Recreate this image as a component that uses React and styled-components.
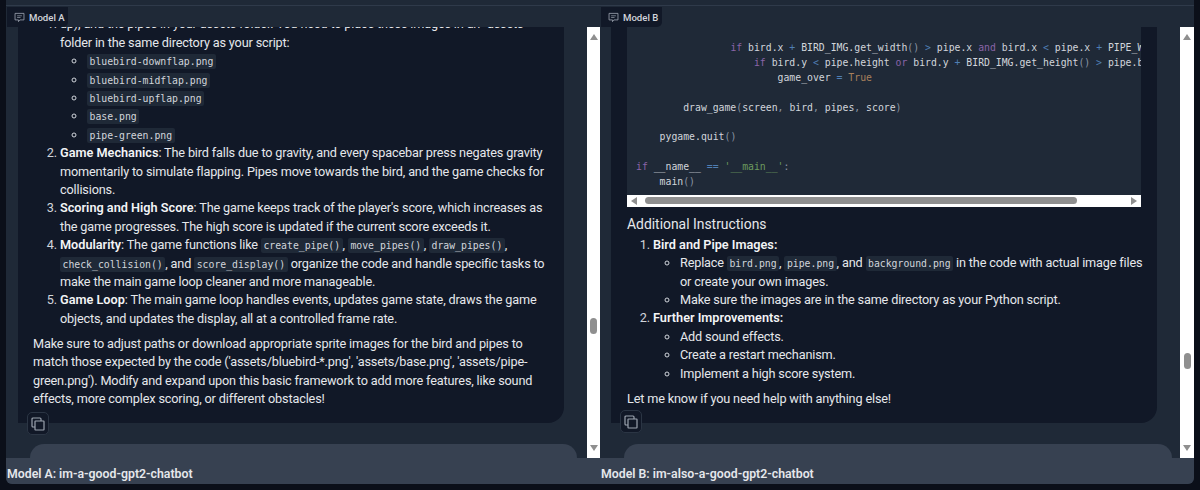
import React from "react";
import styled, { createGlobalStyle } from "styled-components";

const Global = createGlobalStyle`
  html, body { margin: 0; padding: 0; background: #0b0f19; }
  body { font-family: Roboto, "Liberation Sans", sans-serif; }
`;

const Page = styled.div`
  width: 1200px;
  height: 490px;
  padding: 0 6px 6px;
  box-sizing: border-box;
  overflow: hidden;
  background: #0b0f19;
`;
const Shell = styled.div`
  height: 484px;
  display: flex;
  flex-direction: column;
  background: #1f2937;
  border-radius: 0 0 6px 6px;
  overflow: hidden;
`;
const TopStrip = styled.div`
  height: 5px;
  flex: none;
  background: #1f2937;
  border-bottom: 1px solid #2f3a4a;
`;
const Columns = styled.div`
  flex: 1;
  min-height: 0;
  display: grid;
  grid-template-columns: 594px 594px;
`;
const Column = styled.section`
  position: relative;
  display: flex;
  flex-direction: column;
  min-height: 0;
  padding-top: 21px;
  box-sizing: border-box;
`;
const TabLabel = styled.div`
  position: absolute;
  top: 1px;
  left: ${(p) => p.$left}px;
  z-index: 3;
  width: 61px;
  height: 20px;
  display: flex;
  align-items: center;
  gap: 4px;
  padding-left: 7px;
  box-sizing: border-box;
  background: #111827;
  border-radius: 0 0 5px 0;
  color: #d1d5db;
  font-size: 9.6px;
  font-weight: 500;
  white-space: nowrap;
`;
const Body = styled.div`
  flex: 1;
  min-height: 0;
  display: flex;
`;
const Viewport = styled.div`
  position: relative;
  flex: 1;
  min-width: 0;
  overflow: hidden;
  display: flex;
  flex-direction: column;
  justify-content: flex-end;
`;
const Card = styled.article`
  flex: none;
  width: 546px;
  margin-left: ${(p) => p.$inset}px;
  padding: 0 16px ${(p) => p.$bottom}px ${(p) => p.$pad}px;
  box-sizing: border-box;
  background: #111827;
  border-radius: 0 0 16px 0;
  color: #e5e7eb;
  font-size: 12.7px;
  letter-spacing: -0.16px;
  line-height: 18.4px;
`;
const Numbered = styled.ol`
  margin: 0;
  padding-left: ${(p) => p.$indent}px;
`;
const Bulleted = styled.ul`
  margin: 0;
  padding-left: 27px;
  list-style: circle;
`;
const Item = styled.li`
  white-space: nowrap;
  &::marker { color: #d1d5db; }
`;
const Strong = styled.strong`
  font-weight: 600;
  letter-spacing: 0;
  color: #f3f4f6;
`;
const Code = styled.code`
  font-family: "DejaVu Sans Mono", monospace;
  font-size: 9.8px;
  letter-spacing: 0;
  line-height: 1;
  padding: 2px 2.5px;
  background: #1f2937;
  border-radius: 2px;
  color: #d1d5db;
`;
const Para = styled.p`
  margin: 6.6px 0 0;
  white-space: nowrap;
`;
const Heading = styled.h3`
  margin: 0;
  font-size: 13.9px;
  font-weight: 400;
  letter-spacing: 0;
  line-height: 21.6px;
  color: #e5e7eb;
`;
const CodeBlock = styled.div`
  width: 514px;
  margin-bottom: 7.2px;
`;
const Pre = styled.pre`
  margin: 0;
  padding: 0 9px 5px;
  height: 168px;
  box-sizing: border-box;
  overflow: hidden;
  display: flex;
  flex-direction: column;
  justify-content: flex-end;
  background: #1f2937;
  font-family: "DejaVu Sans Mono", monospace;
  font-size: 9.8px;
  letter-spacing: 0;
  line-height: 14.9px;
  color: #d1d5db;
`;
const Kw = styled.span` color: #8a64a8; `;
const Op = styled.span` color: #4f7fb5; `;
const Lit = styled.span` color: #a8805c; `;
const Str = styled.span` color: #6b9a5e; `;
const Dim = styled.span` color: #8a94a3; `;
const HBar = styled.div`
  height: 12px;
  display: flex;
  align-items: center;
  gap: 2px;
  padding: 0 4px;
  box-sizing: border-box;
  background: #fff;
`;
const HThumb = styled.div`
  width: 432px;
  height: 7px;
  margin-left: 6px;
  margin-right: auto;
  border-radius: 4px;
  background: #8f8f8f;
`;
const Arrow = styled.span`
  width: 0;
  height: 0;
  flex: none;
  border-style: solid;
  ${(p) => p.$dir === "up" && "border-width: 0 4px 6px; border-color: transparent transparent #8f8f8f;"}
  ${(p) => p.$dir === "down" && "border-width: 6px 4px 0; border-color: #8f8f8f transparent transparent;"}
  ${(p) => p.$dir === "left" && "border-width: 4px 6px 4px 0; border-color: transparent #8f8f8f transparent transparent;"}
  ${(p) => p.$dir === "right" && "border-width: 4px 0 4px 6px; border-color: transparent transparent transparent #8f8f8f;"}
`;
const VBar = styled.div`
  flex: none;
  width: ${(p) => p.$w}px;
  background: #fff;
  display: flex;
  flex-direction: column;
  align-items: center;
  padding: 7px 0;
  box-sizing: border-box;
`;
const VTrack = styled.div`
  flex: 1;
  width: 100%;
  display: flex;
  justify-content: center;
  padding-top: ${(p) => p.$offset}px;
  box-sizing: border-box;
`;
const VThumb = styled.div`
  width: 7px;
  height: 16px;
  border-radius: 4px;
  background: #8f8f8f;
`;
const CopyButton = styled.button`
  position: absolute;
  left: ${(p) => p.$left}px;
  bottom: ${(p) => p.$bottom}px;
  width: 22px;
  height: 23px;
  padding: 0;
  display: flex;
  align-items: center;
  justify-content: center;
  background: #111827;
  border: 1px solid #2b3544;
  border-radius: 5px;
  color: #9ca3af;
`;
const InputTop = styled.div`
  flex: none;
  height: 14px;
  margin: 21px ${(p) => p.$right}px 0 ${(p) => p.$left}px;
  background: #374151;
  border-radius: 16px 16px 0 0;
`;
const LabelRow = styled.div`
  flex: none;
  height: 26px;
  padding-top: 5px;
  box-sizing: border-box;
  display: grid;
  grid-template-columns: 594px 594px;
  align-items: center;
  background: #374151;
  color: #e5e7eb;
  font-size: 12.3px;
  font-weight: 600;
`;
const ModelName = styled.div`
  padding-left: 1px;
  white-space: nowrap;
`;

const ChatIcon = () => (
  <svg width="11" height="11" viewBox="0 0 16 16" fill="none" stroke="#9ca3af" strokeWidth="1.2">
    <path d="M1.5 2h13v9.5H8.5l-2 2.5v-2.5h-5z" />
    <path d="M4.5 5.5h7M4.5 8h5" strokeWidth="1" />
  </svg>
);
const CopyIcon = () => (
  <svg width="14" height="14" viewBox="0 0 14 14" fill="none" stroke="#9ca3af" strokeWidth="1.2">
    <rect x="4" y="4" width="9" height="9" rx="0.5" />
    <path d="M4 10H2a1 1 0 0 1-1-1V2a1 1 0 0 1 1-1h7a1 1 0 0 1 1 1v2" />
  </svg>
);

const ScrollBar = ({ w, offset }) => (
  <VBar $w={w}>
    <Arrow $dir="up" />
    <VTrack $offset={offset}><VThumb /></VTrack>
    <Arrow $dir="down" />
  </VBar>
);

const ModelALeft = () => (
  <Card $inset={12} $pad={15} $bottom={14.5}>
    <Numbered start={1} $indent={27}>
      <Item>
        up), and the pipes in your assets folder. You need to place these images in an `assets`<br />
        folder in the same directory as your script:
        <Bulleted>
          <Item><Code>bluebird-downflap.png</Code></Item>
          <Item><Code>bluebird-midflap.png</Code></Item>
          <Item><Code>bluebird-upflap.png</Code></Item>
          <Item><Code>base.png</Code></Item>
          <Item><Code>pipe-green.png</Code></Item>
        </Bulleted>
      </Item>
      <Item>
        <Strong>Game Mechanics</Strong>: The bird falls due to gravity, and every spacebar press negates gravity<br />
        momentarily to simulate flapping. Pipes move towards the bird, and the game checks for<br />
        collisions.
      </Item>
      <Item>
        <Strong>Scoring and High Score</Strong>: The game keeps track of the player's score, which increases as<br />
        the game progresses. The high score is updated if the current score exceeds it.
      </Item>
      <Item>
        <Strong>Modularity</Strong>: The game functions like <Code>create_pipe()</Code>, <Code>move_pipes()</Code>, <Code>draw_pipes()</Code>,<br />
        <Code>check_collision()</Code>, and <Code>score_display()</Code> organize the code and handle specific tasks to<br />
        make the main game loop cleaner and more manageable.
      </Item>
      <Item>
        <Strong>Game Loop</Strong>: The main game loop handles events, updates game state, draws the game<br />
        objects, and updates the display, all at a controlled frame rate.
      </Item>
    </Numbered>
    <Para>
      Make sure to adjust paths or download appropriate sprite images for the bird and pipes to<br />
      match those expected by the code ('assets/bluebird-*.png', 'assets/base.png', 'assets/pipe-<br />
      green.png'). Modify and expand upon this basic framework to add more features, like sound<br />
      effects, more complex scoring, or different obstacles!
    </Para>
  </Card>
);

const sp = (n) => " ".repeat(n);

const ModelBRight = () => (
  <Card $inset={11} $pad={16} $bottom={15}>
    <CodeBlock>
      <Pre>
        <div>{sp(16)}<Kw>if</Kw> bird.x <Op>+</Op> BIRD_IMG.get_width<Dim>()</Dim> <Op>&gt;</Op> pipe.x <Kw>and</Kw> bird.x <Op>&lt;</Op> pipe.x <Op>+</Op> PIPE_WIDTH:</div>
        <div>{sp(20)}<Kw>if</Kw> bird.y <Op>&lt;</Op> pipe.height <Kw>or</Kw> bird.y <Op>+</Op> BIRD_IMG.get_height<Dim>()</Dim> <Op>&gt;</Op> pipe.bottom:</div>
        <div>{sp(24)}game_over <Op>=</Op> <Lit>True</Lit></div>
        <div>{" "}</div>
        <div>{sp(8)}draw_game<Dim>(</Dim>screen<Dim>,</Dim> bird<Dim>,</Dim> pipes<Dim>,</Dim> score<Dim>)</Dim></div>
        <div>{" "}</div>
        <div>{sp(4)}pygame.quit<Dim>()</Dim></div>
        <div>{" "}</div>
        <div><Kw>if</Kw> __name__ <Op>==</Op> <Str>'__main__'</Str><Dim>:</Dim></div>
        <div>{sp(4)}main<Dim>()</Dim></div>
      </Pre>
      <HBar>
        <Arrow $dir="left" />
        <HThumb />
        <Arrow $dir="right" />
      </HBar>
    </CodeBlock>
    <Heading>Additional Instructions</Heading>
    <Numbered $indent={26}>
      <Item>
        <Strong>Bird and Pipe Images:</Strong>
        <Bulleted>
          <Item>Replace <Code>bird.png</Code>, <Code>pipe.png</Code>, and <Code>background.png</Code> in the code with actual image files<br />or create your own images.</Item>
          <Item>Make sure the images are in the same directory as your Python script.</Item>
        </Bulleted>
      </Item>
      <Item>
        <Strong>Further Improvements:</Strong>
        <Bulleted>
          <Item>Add sound effects.</Item>
          <Item>Create a restart mechanism.</Item>
          <Item>Implement a high score system.</Item>
        </Bulleted>
      </Item>
    </Numbered>
    <Para>Let me know if you need help with anything else!</Para>
  </Card>
);

export default function App() {
  return (
    <Page>
      <Global />
      <Shell>
        <TopStrip />
        <Columns>
          <Column>
            <TabLabel $left={1}><ChatIcon />Model A</TabLabel>
            <Body>
              <Viewport>
                <ModelALeft />
                <CopyButton $left={21} $bottom={23}><CopyIcon /></CopyButton>
                <InputTop $left={24} $right={10} />
              </Viewport>
              <ScrollBar w={13} offset={278} />
            </Body>
          </Column>
          <Column>
            <TabLabel $left={1}><ChatIcon />Model B</TabLabel>
            <Body>
              <Viewport>
                <ModelBRight />
                <CopyButton $left={20} $bottom={25}><CopyIcon /></CopyButton>
                <InputTop $left={24} $right={8} />
              </Viewport>
              <ScrollBar w={14} offset={313} />
            </Body>
          </Column>
        </Columns>
        <LabelRow>
          <ModelName>Model A: im-a-good-gpt2-chatbot</ModelName>
          <ModelName>Model B: im-also-a-good-gpt2-chatbot</ModelName>
        </LabelRow>
      </Shell>
    </Page>
  );
}
